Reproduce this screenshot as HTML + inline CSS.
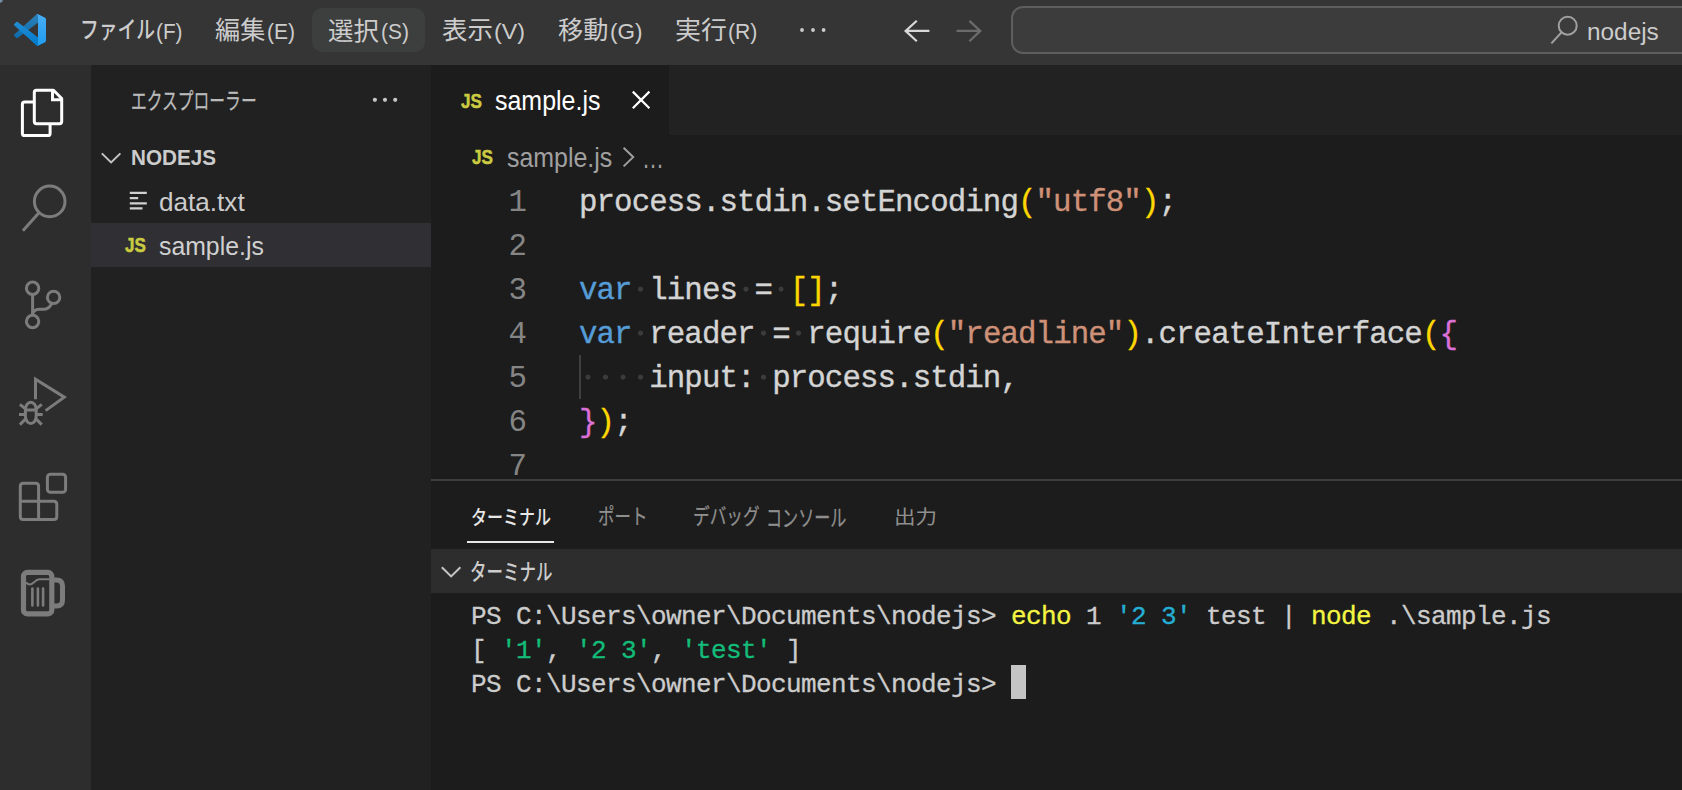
<!DOCTYPE html>
<html lang="ja"><head><meta charset="utf-8"><title>sample.js - nodejs - Visual Studio Code</title>
<style>

html,body{margin:0;padding:0}
body{width:1682px;height:790px;overflow:hidden;background:#1c1c1c;position:relative;font-family:"Liberation Sans","Noto Sans CJK JP",sans-serif;color:#ccc}
.b{position:absolute}
.t{position:absolute;white-space:pre;line-height:1;transform-origin:0 0}
#title{left:0;top:0;width:1682px;height:65px;background:#353535}
#act{left:0;top:65px;width:91px;height:725px;background:#2d2d2d}
#side{left:91px;top:65px;width:340px;height:725px;background:#212121}
#tabs{left:431px;top:65px;width:1251px;height:70px;background:#222222}
#tab{left:431px;top:65px;width:238px;height:70px;background:#1c1c1c}
#sel{left:91px;top:223px;width:340px;height:44px;background:#303034}
#pborder{left:431px;top:479px;width:1251px;height:2px;background:#3d3d3d}
#thead{left:431px;top:549px;width:1251px;height:43.5px;background:#2d2d2d}
#uline{left:467px;top:541px;width:87px;height:2px;background:#e7e7e7}
#cursor{left:1011px;top:665px;width:15px;height:34px;background:#c4c4c4}
#search{left:1011px;top:6px;width:720px;height:44px;border:2px solid #5e5e5e;border-radius:12px;background:#3c3c3c}
#hover{left:312px;top:8px;width:113px;height:44px;border-radius:10px;background:#3d3e3e}
#corner{left:0;top:0;width:5px;height:5px;background:radial-gradient(circle at 0 0,#7d93a6 1.6px,rgba(125,147,166,0) 3.6px)}
#guide{left:579px;top:355px;width:1.5px;height:44px;background:#3f3f3f}
.code{position:absolute;left:579px;white-space:pre;font-family:"Liberation Mono",monospace;font-size:30.8px;letter-spacing:-0.923px;-webkit-text-stroke:0.35px;line-height:44px;height:44px;color:#d4d4d4}
.ln{position:absolute;left:431px;width:95px;text-align:right;white-space:pre;font-family:"Liberation Mono",monospace;font-size:30.8px;letter-spacing:-0.923px;line-height:44px;height:44px;color:#858585}
.term{position:absolute;left:471px;white-space:pre;font-family:"Liberation Mono",monospace;font-size:26px;letter-spacing:-0.603px;-webkit-text-stroke:0.3px;line-height:34.1px;height:34.1px;color:#cccccc}
.k{color:#569cd6}.s{color:#ce9178}.b1{color:#ffd700}.b2{color:#da70d6}.w{background:radial-gradient(circle at 50% 46%,#3b3b3b 2.1px,rgba(59,59,59,0) 2.9px)}
.y{color:#f5f543}.c{color:#25aed4}.g{color:#13bc79}

</style></head>
<body>
<div id="title" class="b"></div>
<div id="hover" class="b"></div>
<div id="search" class="b"></div>
<div id="act" class="b"></div>
<div id="side" class="b"></div>
<div id="sel" class="b"></div>
<div id="tabs" class="b"></div>
<div id="tab" class="b"></div>
<div id="pborder" class="b"></div>
<div id="thead" class="b"></div>
<div id="uline" class="b"></div>
<div id="guide" class="b"></div>
<div id="cursor" class="b"></div>
<div id="corner" class="b"></div>
<svg class="b" style="left:14px;top:14px" width="32" height="32" viewBox="0 0 100 100">
<defs><clipPath id="lc"><path clip-rule="evenodd" d="M70.9119 99.3171C72.4869 99.9307 74.2828 99.8914 75.8725 99.1264L96.4608 89.2197C98.6242 88.1787 100 85.9892 100 83.5872V16.4133C100 14.0113 98.6243 11.8218 96.4609 10.7808L75.8725 0.873756C73.7862 -0.130129 71.3446 0.11576 69.5135 1.44695C69.252 1.63711 69.0028 1.84943 68.769 2.08341L29.3551 38.0415L12.1872 25.0096C10.589 23.7965 8.35363 23.8959 6.86933 25.2461L1.36303 30.2549C-0.452552 31.9064 -0.454633 34.7627 1.35853 36.417L16.2471 50.0001L1.35853 63.5832C-0.454633 65.2374 -0.452552 68.0938 1.36303 69.7453L6.86933 74.7541C8.35363 76.1043 10.589 76.2037 12.1872 74.9905L29.3551 61.9587L68.769 97.9167C69.3925 98.5406 70.1246 99.0104 70.9119 99.3171ZM75.0152 27.2989L45.1091 50.0001L75.0152 72.7012V27.2989Z"/></clipPath><linearGradient id="lg" x1="0" y1="0" x2="0" y2="1"><stop offset="0" stop-color="#fff" stop-opacity="0.18"/><stop offset="1" stop-color="#fff" stop-opacity="0"/></linearGradient></defs>
<g clip-path="url(#lc)">
<path d="M96.4614 10.7962L75.8569 0.875542C73.4719 -0.272773 70.6217 0.211611 68.75 2.08333L1.29858 63.5832C-0.515693 65.2373 -0.513607 68.0937 1.30308 69.7452L6.81272 74.754C8.29793 76.1042 10.5347 76.2036 12.1338 74.9905L93.3609 13.3699C96.086 11.3026 100 13.2462 100 16.6667V16.4275C100 14.0265 98.6246 11.8378 96.4614 10.7962Z" fill="#0065A9"/>
<path d="M96.4614 89.2038L75.8569 99.1245C73.4719 100.273 70.6217 99.7884 68.75 97.9167L1.29858 36.4169C-0.515693 34.7627 -0.513607 31.9063 1.30308 30.2548L6.81272 25.246C8.29793 23.8958 10.5347 23.7964 12.1338 25.0095L93.3609 86.6301C96.086 88.6974 100 86.7538 100 83.3334V83.5726C100 85.9735 98.6246 88.1622 96.4614 89.2038Z" fill="#007ACC"/>
<path d="M75.8578 99.1263C73.4721 100.274 70.6219 99.7885 68.75 97.9166C71.0564 100.223 75 98.5895 75 95.3278V4.67213C75 1.41039 71.0564 -0.223106 68.75 2.08329C70.6219 0.211402 73.4721 -0.273666 75.8578 0.873633L96.4587 10.7807C98.6234 11.8217 100 14.0112 100 16.4132V83.5871C100 85.9891 98.6234 88.1786 96.4586 89.2196L75.8578 99.1263Z" fill="#1F9CF0"/>
<rect x="0" y="0" width="100" height="100" fill="url(#lg)"/>
</g></svg>
<svg class="b" style="left:0;top:0" width="1682" height="790" viewBox="0 0 1682 790" fill="none" stroke-linecap="butt" stroke-linejoin="miter">
<!-- activity bar: explorer -->
<g stroke="#ffffff" stroke-width="3" stroke-linejoin="round">
<path d="M36.5 90.2H53.5L61.7 98.5V121.5Q61.7 123.7 59.5 123.7H36.5Q34.3 123.7 34.3 121.5V92.4Q34.3 90.2 36.5 90.2Z"/>
<path d="M52.5 90.2V99.7H61.7" stroke-linejoin="miter"/>
<path d="M34.3 102.1H24.6Q22.4 102.1 22.4 104.3V133.4Q22.4 135.6 24.6 135.6H47.9Q50.1 135.6 50.1 133.4V123.7"/>
</g>
<!-- search -->
<g stroke="#7c7c7c" stroke-width="3">
<circle cx="49.7" cy="201.4" r="15.3"/>
<path d="M39.2 212.6L22.9 230.8"/>
</g>
<!-- source control -->
<g stroke="#7c7c7c" stroke-width="3">
<circle cx="32.6" cy="288.3" r="6.2"/><circle cx="32.6" cy="321.5" r="6.2"/><circle cx="53.6" cy="297.4" r="6.2"/>
<path d="M32.6 294.5V315.3"/>
<path d="M51.8 303.3Q49 309.3 43.5 309.3H39.5Q32.6 309.3 32.6 315.3"/>
</g>
<!-- run and debug -->
<g stroke="#7c7c7c" stroke-width="3">
<path d="M35.5 399.3V379.2L64.3 397.2L45.6 410.6"/>
<rect x="25.4" y="402.3" width="10.8" height="21.2" rx="5.4" ry="7.5"/>
<path d="M25.3 410.1H36.3M19 414.4H25.3M36.3 414.4H42.7M19.9 404.4L26 409.2M41.8 404.4L35.6 409.2M19.9 424.6L26.2 418.4M41.8 424.6L35.4 418.4"/>
</g>
<!-- extensions -->
<g stroke="#7c7c7c" stroke-width="3">
<rect x="47.4" y="474.2" width="18.2" height="18" rx="3"/>
<path d="M23.3 483.3H35.6Q38.6 483.3 38.6 486.3V501.3H53.8Q56.8 501.3 56.8 504.3V516.6Q56.8 519.6 53.8 519.6H23.3Q20.3 519.6 20.3 516.6V486.3Q20.3 483.3 23.3 483.3ZM20.3 501.3H38.6V519.6"/>
</g>
<!-- beer mug -->
<g stroke="#7c7c7c">
<rect x="23.5" y="572.3" width="28.3" height="41.6" rx="4" stroke-width="5.2"/>
<path d="M52 580H56.5Q62.5 580 62.5 586V600Q62.5 606 56.5 606H52" stroke-width="5"/>
<path d="M26 582.5Q30 586.5 34 582.3Q37 579 40 579.3H49.5" stroke-width="2"/>
<path d="M32.4 588.6V605.4M37.9 588.6V605.4M43.1 588.6V605.4" stroke-width="2.6" stroke-linecap="round"/>
</g>
<!-- title bar arrows -->
<path d="M929.4 30.9H906M916.8 20.7L905.6 30.9L916.8 41.3" stroke="#d8d8d8" stroke-width="2.2"/>
<path d="M956.5 30.9H980M969.4 20.9L980.3 30.9L969.4 41.3" stroke="#6c6c6c" stroke-width="2.2"/>
<!-- title dots -->
<g fill="#cccccc" stroke="none"><circle cx="802" cy="30" r="1.9"/><circle cx="813" cy="30" r="1.9"/><circle cx="823.6" cy="30" r="1.9"/></g>
<!-- command center search icon -->
<g stroke="#a0a0a0" stroke-width="2"><circle cx="1567.7" cy="25.7" r="9"/><path d="M1561.6 32.3L1551.4 43.4"/></g>
<!-- sidebar dots -->
<g fill="#c5c5c5" stroke="none"><circle cx="374.9" cy="99.8" r="2.1"/><circle cx="385" cy="99.8" r="2.1"/><circle cx="395.2" cy="99.8" r="2.1"/></g>
<!-- sidebar chevron -->
<path d="M101.8 153.4L111.1 162.4L120.4 153.4" stroke="#c5c5c5" stroke-width="2"/>
<!-- data.txt icon -->
<path d="M129.8 192.8H146.8M129.8 198.1H138.2M129.8 203.3H146.8M129.8 208.3H142.5" stroke="#d0d0d0" stroke-width="2.2"/>
<!-- tab close -->
<path d="M632.8 91.6L649.4 108.2M649.4 91.6L632.8 108.2" stroke="#ffffff" stroke-width="2.2"/>
<!-- breadcrumb chevron -->
<path d="M623.6 147.8L633.2 157.1L623.6 166.4" stroke="#a0a0a0" stroke-width="2"/>
<!-- terminal header chevron -->
<path d="M441.8 567.3L451.1 576.4L460.4 567.3" stroke="#c5c5c5" stroke-width="2"/>
</svg>
<div class="ln" style="top:181.4px">1</div><div class="code" style="top:181.4px">process.stdin.setEncoding<span class="b1">(</span><span class="s">"utf8"</span><span class="b1">)</span>;</div>
<div class="ln" style="top:225.4px">2</div><div class="code" style="top:225.4px"></div>
<div class="ln" style="top:269.4px">3</div><div class="code" style="top:269.4px"><span class="k">var</span><span class="w"> </span>lines<span class="w"> </span>=<span class="w"> </span><span class="b1">[]</span>;</div>
<div class="ln" style="top:313.4px">4</div><div class="code" style="top:313.4px"><span class="k">var</span><span class="w"> </span>reader<span class="w"> </span>=<span class="w"> </span>require<span class="b1">(</span><span class="s">"readline"</span><span class="b1">)</span>.createInterface<span class="b1">(</span><span class="b2">{</span></div>
<div class="ln" style="top:357.4px">5</div><div class="code" style="top:357.4px"><span class="w"> </span><span class="w"> </span><span class="w"> </span><span class="w"> </span>input:<span class="w"> </span>process.stdin,</div>
<div class="ln" style="top:401.4px">6</div><div class="code" style="top:401.4px"><span class="b2">}</span><span class="b1">)</span>;</div>
<div class="ln" style="top:445.4px">7</div><div class="code" style="top:445.4px"></div>
<div class="term" style="top:599.9px">PS C:\Users\owner\Documents\nodejs&gt; <span class="y">echo</span> 1 <span class="c">'2 3'</span> test | <span class="y">node</span> .\sample.js</div>
<div class="term" style="top:634.0px">[ <span class="g">'1'</span>, <span class="g">'2 3'</span>, <span class="g">'test'</span> ]</div>
<div class="term" style="top:668.1px">PS C:\Users\owner\Documents\nodejs&gt; </div>
<div id="menubar">
<span class="t" style="left:79.77px;top:18.45px;font-size:26px;font-weight:500;color:#cccccc;transform:scale(0.7226,0.9217)">ファイル</span>
<span class="t" style="left:155.50px;top:20.17px;font-size:24px;color:#cccccc;transform:scale(0.8649,0.9511)">(F)</span>
<span class="t" style="left:215.27px;top:18.36px;font-size:26px;color:#cccccc;transform:scale(0.9672,0.9726)">編集</span>
<span class="t" style="left:267.29px;top:20.17px;font-size:24px;color:#cccccc;transform:scale(0.8759,0.9511)">(E)</span>
<span class="t" style="left:328.42px;top:18.76px;font-size:26px;color:#cccccc;transform:scale(0.9771,0.9558)">選択</span>
<span class="t" style="left:380.79px;top:20.17px;font-size:24px;color:#cccccc;transform:scale(0.8724,0.9511)">(S)</span>
<span class="t" style="left:442.17px;top:18.46px;font-size:26px;color:#cccccc;transform:scale(0.9789,0.9684)">表示</span>
<span class="t" style="left:493.65px;top:20.17px;font-size:24px;color:#cccccc;transform:scale(0.9655,0.9511)">(V)</span>
<span class="t" style="left:558.07px;top:18.46px;font-size:26px;color:#cccccc;transform:scale(0.9688,0.9583)">移動</span>
<span class="t" style="left:609.59px;top:20.17px;font-size:24px;color:#cccccc;transform:scale(0.9386,0.9511)">(G)</span>
<span class="t" style="left:675.40px;top:18.46px;font-size:26px;color:#cccccc;transform:scale(0.9990,0.9583)">実行</span>
<span class="t" style="left:727.78px;top:20.17px;font-size:24px;color:#cccccc;transform:scale(0.8826,0.9511)">(R)</span>
<span class="t" style="left:1586.89px;top:20.16px;font-size:25px;color:#cccccc;transform:scale(0.9746,0.9649)">nodejs</span>
</div>
<div id="explorer">
<span class="t" style="left:130.55px;top:90.42px;font-size:22px;-webkit-text-stroke:0.25px;color:#bbbbbb;transform:scale(0.7166,1.0308)">エクスプローラー</span>
<span class="t" style="left:130.69px;top:147.59px;font-size:22px;font-weight:bold;color:#cccccc;transform:scale(0.9394,0.9651)">NODEJS</span>
<span class="t" style="left:158.90px;top:188.75px;font-size:26px;color:#cccccc;transform:scale(1.0042,1.0000)">data.txt</span>
<span class="t" style="left:159.18px;top:232.72px;font-size:26px;color:#d0d0d0;transform:scale(0.9543,1.0080)">sample.js</span>
<span class="t" style="left:124.60px;top:235.38px;font-size:21px;font-weight:bold;-webkit-text-stroke:0.5px;color:#cbcb41;transform:scale(0.8119,0.9613)">JS</span>
</div>
<div id="editor-header">
<span class="t" style="left:460.50px;top:89.71px;font-size:21px;font-weight:bold;-webkit-text-stroke:0.5px;color:#cbcb41;transform:scale(0.8158,0.9935)">JS</span>
<span class="t" style="left:494.78px;top:86.75px;font-size:26px;color:#ffffff;transform:scale(0.9598,1.0293)">sample.js</span>
<span class="t" style="left:472.40px;top:147.16px;font-size:21px;font-weight:bold;-webkit-text-stroke:0.5px;color:#cbcb41;transform:scale(0.8158,0.9677)">JS</span>
<span class="t" style="left:506.98px;top:144.35px;font-size:26px;color:#a0a0a0;transform:scale(0.9589,1.0293)">sample.js</span>
<span class="t" style="left:642.24px;top:143.40px;font-size:25px;color:#a0a0a0;transform:scale(0.8811,1.2000)">…</span>
</div>
<div id="panel-header">
<span class="t" style="left:470.73px;top:508.40px;font-size:22px;font-weight:500;color:#e7e7e7;transform:scale(0.7273,0.9299)">ターミナル</span>
<span class="t" style="left:597.87px;top:507.13px;font-size:22px;-webkit-text-stroke:0.25px;color:#8f8f8f;transform:scale(0.7480,0.9722)">ポート</span>
<span class="t" style="left:693.47px;top:505.80px;font-size:22px;-webkit-text-stroke:0.25px;color:#8f8f8f;transform:scale(0.7579,0.9976)">デバッグ</span>
<span class="t" style="left:765.82px;top:506.50px;font-size:22px;-webkit-text-stroke:0.25px;color:#8f8f8f;transform:scale(0.7310,1.0400)">コンソール</span>
<span class="t" style="left:894.15px;top:509.23px;font-size:22px;color:#8f8f8f;transform:scale(0.9797,0.8593)">出力</span>
<span class="t" style="left:470.19px;top:561.50px;font-size:22px;font-weight:500;color:#cccccc;transform:scale(0.7497,1.0182)">ターミナル</span>
</div>
</body></html>
